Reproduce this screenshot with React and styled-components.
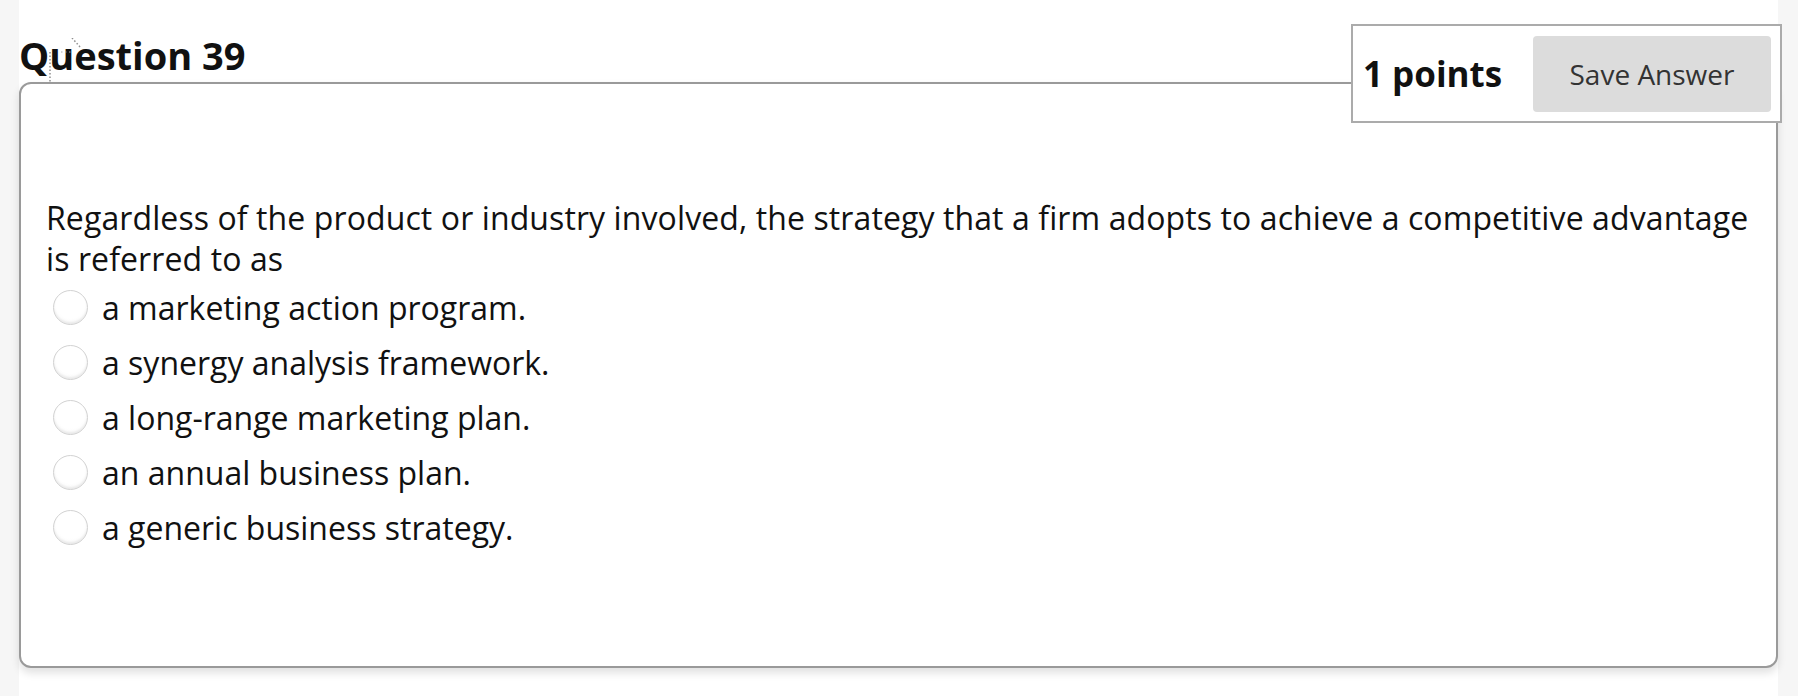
import React from "react";
import styled, { createGlobalStyle } from "styled-components";

const Global = createGlobalStyle`
  html, body {
    margin: 0;
    padding: 0;
    background: #f6f6f6;
  }
  body {
    font-family: "Open Sans", "Noto Sans", sans-serif;
    color: #111;
  }
`;

const Page = styled.div`
  margin: 0 20px 0 19px;
  background: #fff;
  min-height: 696px;
  padding-top: 35px;
  box-sizing: border-box;
`;

const Header = styled.div`
  position: relative;
  height: 47px;
`;

const Title = styled.h2`
  margin: 0;
  font-size: 38px;
  line-height: 40px;
  font-weight: 700;
  color: #111;
`;

const DragMark = styled.svg`
  position: absolute;
  left: 26px;
  top: 3px;
  pointer-events: none;
`;

const PointsBox = styled.div`
  position: absolute;
  top: -11px;
  right: -4px;
  width: 431px;
  height: 99px;
  box-sizing: border-box;
  border: 2px solid #ababab;
  background: #fff;
  display: flex;
  align-items: center;
  justify-content: space-between;
  padding: 0 9px 0 10px;
  z-index: 2;
`;

const Points = styled.span`
  font-size: 35px;
  font-weight: 700;
  color: #111;
`;

const SaveButton = styled.button`
  width: 238px;
  height: 76px;
  border: none;
  border-radius: 4px;
  background: #dcdcdc;
  color: #333;
  font-family: "Open Sans", sans-serif;
  font-size: 28px;
  cursor: pointer;
`;

const Card = styled.div`
  height: 586px;
  box-sizing: border-box;
  border: 2px solid #9a9a9a;
  border-radius: 12px;
  box-shadow: 0 5px 8px rgba(0, 0, 0, 0.12);
  padding: 113px 20px 0 25px;
  background: #fff;
`;

const Prompt = styled.p`
  margin: 0;
  font-size: 32px;
  line-height: 41px;
  letter-spacing: 0.1px;
  color: #111;
`;

const Options = styled.div`
  display: flex;
  flex-direction: column;
  margin-top: 1px;
`;

const Option = styled.label`
  display: flex;
  align-items: center;
  gap: 14px;
  padding: 7px 0 7px 7px;
  min-height: 55px;
  box-sizing: border-box;
  font-size: 32px;
  line-height: 41px;
  color: #111;
  cursor: pointer;
`;

const Radio = styled.span`
  width: 35px;
  height: 35px;
  box-sizing: border-box;
  border-radius: 50%;
  border: 1px solid #d2d2d2;
  background: radial-gradient(circle at 50% 40%, #ffffff 55%, #f1f1f1 100%);
  box-shadow: inset 0 -2px 2px rgba(0, 0, 0, 0.06);
  flex-shrink: 0;
`;

const options = [
  "a marketing action program.",
  "a synergy analysis framework.",
  "a long-range marketing plan.",
  "an annual business plan.",
  "a generic business strategy.",
];

export default function App() {
  return (
    <>
      <Global />
      <Page>
        <Header>
          <Title>Question 39</Title>
          <DragMark width="40" height="44" viewBox="0 0 40 44">
            <line x1="5" y1="14" x2="5" y2="44" stroke="#8f8f8f" strokeWidth="1.5" strokeDasharray="1.5 2" />
            <line x1="27" y1="0" x2="36" y2="10" stroke="#8f8f8f" strokeWidth="1.5" strokeDasharray="1.5 2" />
            <line x1="16" y1="14" x2="27" y2="14" stroke="#aaaaaa" strokeWidth="1" strokeDasharray="1.5 2.5" />
          </DragMark>
          <PointsBox>
            <Points>1 points</Points>
            <SaveButton type="button">Save Answer</SaveButton>
          </PointsBox>
        </Header>
        <Card>
          <Prompt>
            Regardless of the product or industry involved, the strategy that a firm adopts to achieve a competitive advantage is referred to as
          </Prompt>
          <Options>
            {options.map((o) => (
              <Option key={o}>
                <Radio />
                <span>{o}</span>
              </Option>
            ))}
          </Options>
        </Card>
      </Page>
    </>
  );
}
